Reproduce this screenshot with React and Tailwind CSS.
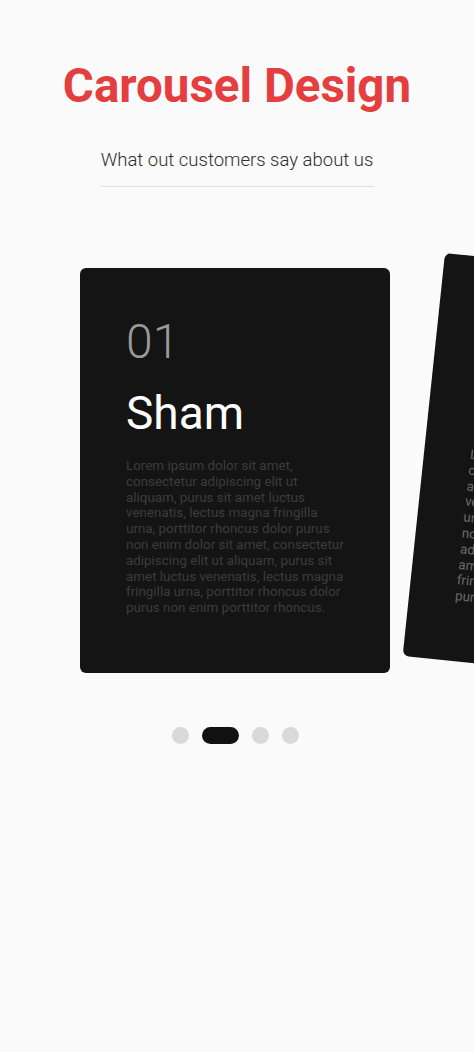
import React from "react";

const lorem =
  "Lorem ipsum dolor sit amet, consectetur adipiscing elit ut aliquam, purus sit amet luctus venenatis, lectus magna fringilla urna, porttitor rhoncus dolor purus non enim dolor sit amet, consectetur adipiscing elit ut aliquam, purus sit amet luctus venenatis, lectus magna fringilla urna, porttitor rhoncus dolor purus non enim porttitor rhoncus.";

const slides = [
  { num: "01", name: "Sham" },
  { num: "02", name: "Arun" },
];

function Card({ slide, dim }) {
  return (
    <div className="w-[310px] h-[405px] rounded-[6px] bg-[#141414] pl-[46px] pr-[42px] pt-[50px]">
      <p className="text-[48px] leading-none font-light text-[#9a9a9a]">{slide.num}</p>
      <h3 className="mt-[24px] text-[46px] leading-none font-normal text-white">{slide.name}</h3>
      <p
        className={`mt-[22px] text-[13.4px] leading-[15.8px] ${
          dim ? "text-[#6a6a6a]" : "text-[#3c3c3c]"
        }`}
      >
        {lorem}
      </p>
    </div>
  );
}

export default function App() {
  const active = 1;

  return (
    <div
      className="w-full h-[1052px] overflow-hidden bg-[#fafafa] flex flex-col items-center"
      style={{ fontFamily: "Roboto, 'Liberation Sans', sans-serif" }}
    >
      <h1 className="mt-[63px] text-[47.5px] leading-none font-bold text-[#e53e3e]">
        Carousel Design
      </h1>
      <div className="mt-[40px] w-[273px] pb-[17px] border-b border-[#e0e0e0] text-center">
        <p className="text-[18.5px] leading-none font-light text-[#2e2e2e] whitespace-nowrap">
          What out customers say about us
        </p>
      </div>

      {/* carousel */}
      <div className="self-start ml-[80px] mt-[81px] w-[310px] relative">
        <Card slide={slides[0]} />
        <div className="absolute left-[365px] top-[-15px] origin-top-left rotate-[6deg]">
          <Card slide={slides[1]} dim />
        </div>

        <div className="mt-[54px] flex items-center justify-center gap-[13px]">
          {[0, 1, 2, 3].map((i) => (
            <span
              key={i}
              className={
                i === active
                  ? "h-[17px] w-[37px] rounded-full bg-[#111111]"
                  : "h-[17px] w-[17px] rounded-full bg-[#d9d9d9]"
              }
            />
          ))}
        </div>
      </div>
    </div>
  );
}
